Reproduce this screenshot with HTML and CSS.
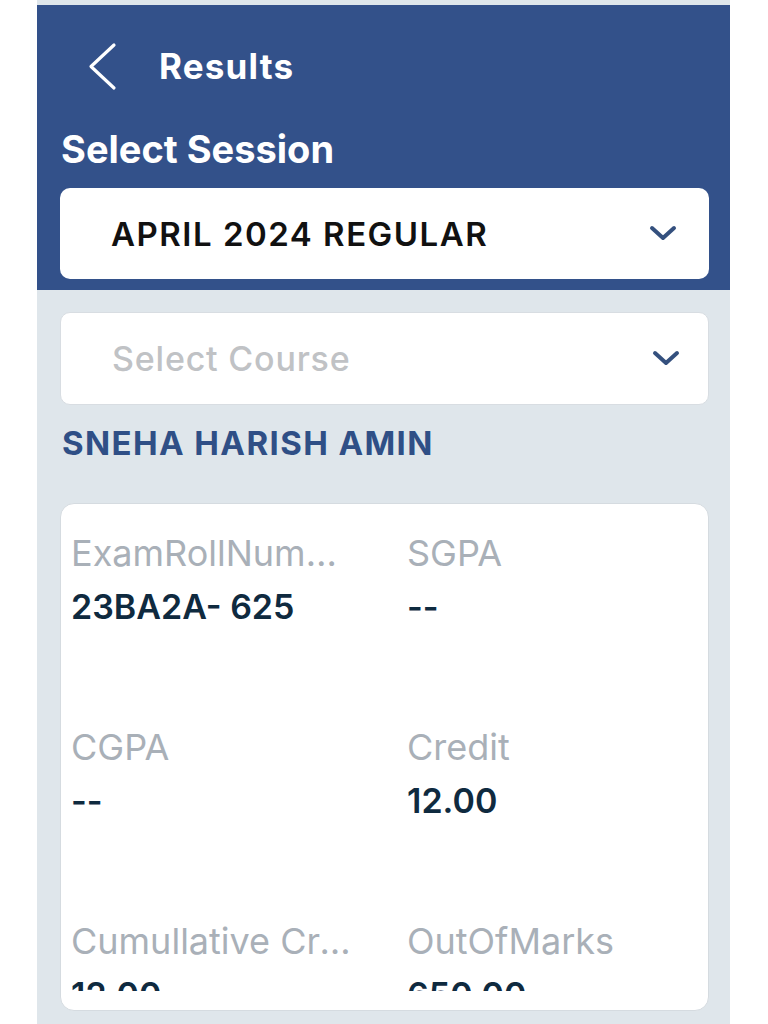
FILE: index.html
```html
<!DOCTYPE html>
<html>
<head>
    <meta charset="utf-8">
    <meta name="viewport" content="width=device-width, initial-scale=1.0">
    <title>Results</title>
    <link rel="stylesheet" href="styles.css">
</head>
<body>
<div class="screen">
    <div class="header">
        <div class="topbar">
            <span class="back">
                <svg width="30" height="49" viewBox="0 0 30 49">
                    <polyline points="27,3 4,24.5 27,46" fill="none" stroke="#ffffff" stroke-width="3.2"
                              stroke-linecap="round" stroke-linejoin="round"/>
                </svg>
            </span>
            <span class="title">Results</span>
        </div>
        <div class="session-label">Select Session</div>
        <div class="dropdown">
            <span class="dropdown-text">APRIL 2024 REGULAR</span>
            <svg class="caret" width="28" height="17" viewBox="0 0 28 17">
                <polyline points="3,3 14,13 25,3" fill="none" stroke="#34507e" stroke-width="4"
                          stroke-linecap="round" stroke-linejoin="round"/>
            </svg>
        </div>
    </div>

    <div class="content">
        <div class="dropdown dropdown-course">
            <span class="placeholder">Select Course</span>
            <svg class="caret" width="28" height="17" viewBox="0 0 28 17">
                <polyline points="3,3 14,13 25,3" fill="none" stroke="#34507e" stroke-width="4"
                          stroke-linecap="round" stroke-linejoin="round"/>
            </svg>
        </div>

        <div class="student">SNEHA HARISH AMIN</div>

        <div class="card">
            <div class="card-inner">
                <div class="item">
                    <div class="label">ExamRollNumber</div>
                    <div class="value">23BA2A- 625</div>
                </div>
                <div class="item">
                    <div class="label">SGPA</div>
                    <div class="value">--</div>
                </div>
                <div class="item">
                    <div class="label">CGPA</div>
                    <div class="value">--</div>
                </div>
                <div class="item">
                    <div class="label">Credit</div>
                    <div class="value">12.00</div>
                </div>
                <div class="item">
                    <div class="label">Cumullative Credit</div>
                    <div class="value">12.00</div>
                </div>
                <div class="item">
                    <div class="label">OutOfMarks</div>
                    <div class="value">650.00</div>
                </div>
            </div>
        </div>
    </div>
</div>
</body>
</html>
```

FILE: styles.css
```css
body {
    margin: 0;
    background: white;
    font-family: Inter, "Liberation Sans", sans-serif;
}

.screen {
    width: 693px;
    height: 1024px;
    margin-left: 37px;
    padding-top: 5px;
    box-sizing: border-box;
    background: #dfe6eb;
    overflow: hidden;
}

.header {
    background: #33518a;
    padding: 0 21px 11px 23px;
}

.topbar {
    display: flex;
    align-items: center;
    height: 112px;
    padding-top: 10px;
    box-sizing: border-box;
}

.back {
    display: flex;
    margin-left: 27px;
    width: 72px;
}

.title {
    color: white;
    font-size: 35px;
    font-weight: 700;
    letter-spacing: 1.2px;
}

.session-label {
    color: white;
    font-size: 38px;
    font-weight: 700;
    line-height: 46px;
    margin: 9px 0 0 1px;
}

.dropdown {
    display: flex;
    align-items: center;
    justify-content: space-between;
    height: 91px;
    margin-top: 16px;
    padding: 0 32px 0 51px;
    background: white;
    border-radius: 10px;
}

.dropdown-text {
    color: #111111;
    font-size: 33px;
    font-weight: 600;
    letter-spacing: 1.5px;
}

.caret {
    display: block;
}

.content {
    padding: 22px 21px 0 23px;
}

.dropdown-course {
    margin-top: 0;
    height: 93px;
    box-sizing: border-box;
    border: 1px solid #d8dde2;
    padding-right: 28px;
}

.placeholder {
    color: #c0c2c5;
    font-size: 34px;
    font-weight: 500;
    letter-spacing: 0.8px;
}

.student {
    color: #2f4f86;
    font-size: 33px;
    font-weight: 700;
    letter-spacing: 1.4px;
    margin: 18px 0 0 2px;
    line-height: 40px;
}

.card {
    margin-top: 40px;
    height: 508px;
    box-sizing: border-box;
    background: white;
    border: 1px solid #d5dbe0;
    border-radius: 14px;
    padding: 27px 0 19px 10px;
}

.card-inner {
    display: grid;
    grid-template-columns: 336px 300px;
    grid-auto-rows: 194px;
    height: 100%;
    overflow: hidden;
}

.label {
    color: #a9b0b8;
    font-size: 36px;
    line-height: 44px;
    white-space: nowrap;
    overflow: hidden;
    text-overflow: ellipsis;
    width: 282px;
}

.value {
    color: #0f2a3f;
    font-size: 34px;
    font-weight: 600;
    line-height: 44px;
    margin-top: 10px;
}
```
